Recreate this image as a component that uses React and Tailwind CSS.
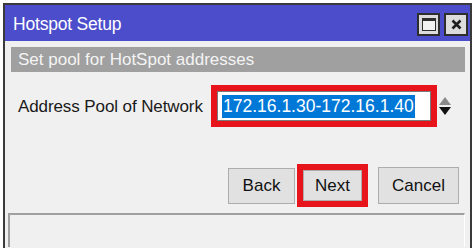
export default function App() {
  return (
    <div className="w-[474px] h-[248px] overflow-hidden bg-white pt-[3px] pl-[3px] pr-[2px] font-['Liberation_Sans',Arial,sans-serif]">
      <div className="h-[260px] border-2 border-b-0 border-[#3a3a3a] bg-[#f0f0f0] flex flex-col">
        {/* title bar */}
        <div className="h-[36px] bg-[#4b4dcb] flex items-start justify-between pl-[8px] pr-[2px]">
          <span className="text-white text-[17.5px] leading-none mt-[11px] tracking-[-0.2px]">Hotspot Setup</span>
          <div className="flex gap-[4px] mt-[8px]">
            <div className="w-[23px] h-[23px] border-2 border-[#2e2e2e] bg-[#dcdcdc] flex items-center justify-center">
              <div className="w-[14px] h-[13px] border border-[#2e2e2e] border-t-[3px] bg-[#f2f2f2]" />
            </div>
            <div className="w-[24px] h-[23px] border-2 border-[#2e2e2e] bg-[#dcdcdc] flex items-center justify-center">
              <svg width="11" height="11" viewBox="0 0 11 11">
                <path d="M1.5 1.5 L9.5 9.5 M9.5 1.5 L1.5 9.5" stroke="#1e1e1e" strokeWidth="2.6" />
              </svg>
            </div>
          </div>
        </div>

        {/* subtitle */}
        <div className="ml-[6px] mr-[5px] mt-[6px] h-[25px] bg-[#a0a0a0] flex items-center pl-[7px]">
          <span className="text-[#f4f4f4] text-[17px] leading-none">Set pool for HotSpot addresses</span>
        </div>

        {/* address pool row */}
        <div className="mt-[13px] flex items-center pl-[13px]">
          <span className="text-[#1a1a1a] text-[17px] leading-none w-[193px] tracking-[-0.1px]">Address Pool of Network</span>
          <div className="w-[226px] h-[42px] border-[6px] border-[#e8141c] bg-white">
            <div className="h-full border border-[#7a7a7a] flex items-center pl-[4px]">
              <span className="bg-[#0078d7] text-white text-[17.5px] leading-[23px] h-[23px] px-[1px]">172.16.1.30-172.16.1.40</span>
            </div>
          </div>
          <div className="ml-[1px] flex flex-col items-center gap-[2px] w-[14px]">
            <svg width="12" height="8" viewBox="0 0 12 8">
              <path d="M6 0 L12 8 L0 8 Z" fill="#8a8a8a" />
            </svg>
            <svg width="12" height="8" viewBox="0 0 12 8">
              <path d="M0 0 L12 0 L6 8 Z" fill="#111" />
            </svg>
          </div>
        </div>

        {/* buttons */}
        <div className="mt-[37px] flex items-center justify-end pr-[11px] h-[43px]">
          <button className="w-[67px] h-[36px] border border-[#adadad] bg-[#e1e1e1] text-[17px] text-[#111] leading-none">Back</button>
          <div className="ml-[2px] w-[71px] h-[43px] border-[6px] border-[#e8141c] bg-[#f0f0f0]">
            <button className="w-full h-full border border-[#adadad] bg-[#e1e1e1] text-[17px] text-[#111] leading-none">Next</button>
          </div>
          <button className="ml-[10px] w-[81px] h-[37px] border border-[#adadad] bg-[#e1e1e1] text-[17px] text-[#111] leading-none">Cancel</button>
        </div>

        {/* status area */}
        <div className="mt-[6px] ml-[3px] mr-[5px] h-[34px] border-t-2 border-l-2 border-[#a0a0a0] border-r border-r-white bg-[#f0f0f0]" />
      </div>
    </div>
  )
}
